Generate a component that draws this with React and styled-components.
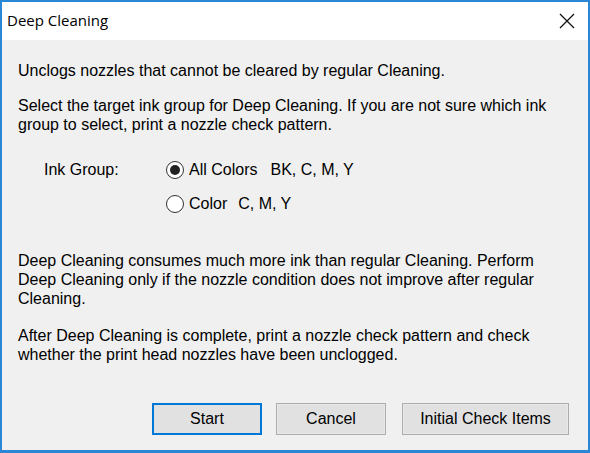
import React from 'react';
import styled, { createGlobalStyle } from 'styled-components';

const Global = createGlobalStyle`
  html, body { margin: 0; padding: 0; background: #fff; }
  body { font-family: "Liberation Sans", Arial, sans-serif; }
`;

const Window = styled.div`
  width: 590px;
  height: 453px;
  box-sizing: border-box;
  border: 2px solid #2b86d6;
  border-bottom-width: 3px;
  display: flex;
  flex-direction: column;
  background: #f0f0f0;
`;

const TitleBar = styled.div`
  height: 38px;
  background: #fff;
  display: flex;
  align-items: center;
  justify-content: space-between;
  padding: 0 0 0 5px;
  flex-shrink: 0;
`;

const Title = styled.div`
  font-family: "Open Sans", "Liberation Sans", sans-serif;
  font-size: 15px;
  color: #000;
  padding-bottom: 2px;
`;

const CloseBtn = styled.div`
  width: 46px;
  height: 38px;
  display: flex;
  align-items: center;
  justify-content: center;
  margin-right: -2px;
`;

const Body = styled.div`
  flex: 1;
  padding: 21px 16px 0 16px;
  display: flex;
  flex-direction: column;
  font-size: 16px;
  line-height: 19px;
  color: #000;
`;

const Para = styled.p`
  margin: 0 0 ${p => p.gap || 17}px 0;
`;

const InkRow = styled.div`
  display: flex;
  padding-left: 26px;
  margin-top: 9px;
`;

const InkLabel = styled.div`
  width: 122px;
`;

const Options = styled.div`
  display: flex;
  flex-direction: column;
  gap: 15px;
`;

const Option = styled.div`
  display: flex;
  align-items: center;
  height: 19px;
`;

const Radio = styled.span`
  width: 18px;
  height: 18px;
  box-sizing: border-box;
  border: 1px solid #333;
  border-radius: 50%;
  background: #fff;
  display: inline-flex;
  align-items: center;
  justify-content: center;
  margin-right: 5px;
  &::after {
    content: "";
    width: 10px;
    height: 10px;
    border-radius: 50%;
    background: ${p => (p.checked ? '#222' : 'transparent')};
  }
`;

const Sub = styled.span`
  margin-left: ${p => p.gap}px;
`;

const Footer = styled.div`
  margin-top: auto;
  display: flex;
  justify-content: flex-end;
  gap: 14px;
  padding: 0 3px 15px 0;
`;

const Button = styled.button`
  font-family: "Liberation Sans", Arial, sans-serif;
  font-size: 16px;
  color: #000;
  height: 32px;
  width: ${p => p.w}px;
  margin-left: ${p => p.ml || 0}px;
  background: #e1e1e1;
  border: ${p => (p.primary ? '2px solid #0078d7' : '1px solid #adadad')};
  box-shadow: ${p => (p.primary ? 'none' : 'inset 0 0 0 1px #e8e8e8')};
  padding: 0;
`;

export default function App() {
  return (
    <>
      <Global />
      <Window>
        <TitleBar>
          <Title>Deep Cleaning</Title>
          <CloseBtn>
            <svg width="16" height="16" viewBox="0 0 16 16">
              <path d="M1 1 L15 15 M15 1 L1 15" stroke="#111" strokeWidth="1.3" />
            </svg>
          </CloseBtn>
        </TitleBar>
        <Body>
          <Para gap={16}>Unclogs nozzles that cannot be cleared by regular Cleaning.</Para>
          <Para gap={17}>
            Select the target ink group for Deep Cleaning. If you are not sure which ink
            <br />
            group to select, print a nozzle check pattern.
          </Para>
          <InkRow>
            <InkLabel>Ink Group:</InkLabel>
            <Options>
              <Option>
                <Radio checked />
                All Colors<Sub gap={13}>BK, C, M, Y</Sub>
              </Option>
              <Option>
                <Radio />
                Color<Sub gap={11}>C, M, Y</Sub>
              </Option>
            </Options>
          </InkRow>
          <Para gap={18} style={{ marginTop: 38 }}>
            Deep Cleaning consumes much more ink than regular Cleaning. Perform
            <br />
            Deep Cleaning only if the nozzle condition does not improve after regular
            <br />
            Cleaning.
          </Para>
          <Para>
            After Deep Cleaning is complete, print a nozzle check pattern and check
            <br />
            whether the print head nozzles have been unclogged.
          </Para>
          <Footer>
            <Button primary w={110}>Start</Button>
            <Button w={110}>Cancel</Button>
            <Button w={167} ml={2}>Initial Check Items</Button>
          </Footer>
        </Body>
      </Window>
    </>
  );
}
